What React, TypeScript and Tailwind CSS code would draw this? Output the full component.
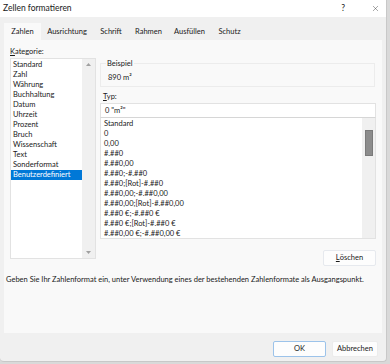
import { X } from 'lucide-react'

const TABS = [
  { label: 'Zahlen', w: 'w-[37px]', active: true },
  { label: 'Ausrichtung', w: 'w-[52px]', active: false },
  { label: 'Schrift', w: 'w-[36px]', active: false },
  { label: 'Rahmen', w: 'w-[39px]', active: false },
  { label: 'Ausfüllen', w: 'w-[43px]', active: false },
  { label: 'Schutz', w: 'w-[37px]', active: false },
]

const CATEGORIES = [
  'Standard',
  'Zahl',
  'Währung',
  'Buchhaltung',
  'Datum',
  'Uhrzeit',
  'Prozent',
  'Bruch',
  'Wissenschaft',
  'Text',
  'Sonderformat',
  'Benutzerdefiniert',
]

const FORMATS = [
  'Standard',
  '0',
  '0,00',
  '#.##0',
  '#.##0,00',
  '#.##0;-#.##0',
  '#.##0;[Rot]-#.##0',
  '#.##0,00;-#.##0,00',
  '#.##0,00;[Rot]-#.##0,00',
  '#.##0 €;-#.##0 €',
  '#.##0 €;[Rot]-#.##0 €',
  '#.##0,00 €;-#.##0,00 €',
]

export default function App() {
  return (
    <div
      className="w-[390px] h-[364px] bg-[#d9d9d9] overflow-hidden text-[7.5px] text-[#1a1a1a]"
      style={{ fontFamily: 'Lato, "Noto Sans", sans-serif' }}
    >
      <div className="w-[387px] h-[362px] bg-[#f0f0f0] flex flex-col rounded-b-[4px] border-r border-b border-[#c8c8c8]">
        {/* title bar */}
        <div className="h-[17px] bg-white flex items-center pl-[3px] pr-[6px]">
          <span className="text-[8.5px] flex-1">Zellen formatieren</span>
          <span className="text-[8.5px] mr-[26px]">?</span>
          <X size={9} strokeWidth={1} />
        </div>

        {/* tabs */}
        <div className="flex pl-[4px] mt-[6px] h-[17px]">
          {TABS.map((t) => (
            <div
              key={t.label}
              className={`${t.w} flex items-center justify-center ${t.active ? 'bg-[#f9f9f9]' : ''}`}
            >
              {t.label}
            </div>
          ))}
        </div>

        {/* panel */}
        <div className="mx-[4px] h-[293px] bg-[#f9f9f9] flex flex-col px-[6px]">
          <div className="flex gap-[4px] pt-[7px]">
            {/* left */}
            <div className="w-[86px] flex flex-col">
              <div className="h-[11px] leading-[10px]">
                <span className="underline">K</span>ategorie:
              </div>
              <div className="h-[201px] bg-white border border-[#e2e2e2] flex">
                <div className="flex-1 pt-[1px]">
                  {CATEGORIES.map((c) => (
                    <div
                      key={c}
                      className={`h-[10px] leading-[10px] pl-[2px] ${
                        c === 'Benutzerdefiniert' ? 'bg-[#0078d7] text-white' : ''
                      }`}
                    >
                      {c}
                    </div>
                  ))}
                </div>
                <div className="w-[13px] bg-[#f0f0f0] flex flex-col items-center justify-between py-[4px]">
                  <svg width="5" height="3" viewBox="0 0 5 3">
                    <path d="M2.5 0 L5 3 L0 3 Z" fill="#a0a0a0" />
                  </svg>
                  <svg width="5" height="3" viewBox="0 0 5 3">
                    <path d="M0 0 L5 0 L2.5 3 Z" fill="#a0a0a0" />
                  </svg>
                </div>
              </div>
            </div>

            {/* right */}
            <div className="flex-1 flex flex-col pt-[16px]">
              <div className="relative h-[24px] border border-[#ececec] mr-[1px]">
                <span className="absolute -top-[5px] left-[5px] bg-[#f9f9f9] px-[1px] leading-[9px]">
                  Beispiel
                </span>
                <div className="pl-[7px] pt-[9px] leading-[10px]">890 m²</div>
              </div>
              <div className="mt-[5px] h-[10px] leading-[10px] pl-[3px]">
                <span className="underline">T</span>yp:
              </div>
              <div className="mt-[1px] h-[15px] bg-white border border-[#e2e2e2] border-b-[#d6d6d6] flex items-center pl-[4px]">
                0 "m²"
              </div>
              <div className="h-[121px] bg-white border border-t-0 border-[#e2e2e2] flex">
                <div className="flex-1 pt-[1px]">
                  {FORMATS.map((f) => (
                    <div key={f} className="h-[10px] leading-[10px] pl-[3px] whitespace-nowrap">
                      {f}
                    </div>
                  ))}
                </div>
                <div className="w-[13px] bg-[#f0f0f0] pt-[12px] flex justify-center">
                  <div className="w-[8px] h-[26px] bg-[#8c8c8c] border border-[#7a7a7a]" />
                </div>
              </div>
              <div className="flex justify-end mt-[11px]">
                <button className="w-[53px] h-[16px] bg-[#fdfdfd] border border-[#e6e9ee] rounded-[2px] flex items-center justify-center">
                  <span className="underline">L</span>öschen
                </button>
              </div>
            </div>
          </div>

          <div className="mt-[9px] leading-[10px] -ml-[4px] whitespace-nowrap">
            Geben Sie Ihr Zahlenformat ein, unter Verwendung eines der bestehenden Zahlenformate als Ausgangspunkt.
          </div>
        </div>

        {/* footer */}
        <div className="flex justify-end gap-[6px] pr-[8px] mt-[8px]">
          <button className="w-[53px] h-[16px] bg-[#fdfdfd] border border-[#9cc3ea] rounded-[2px] flex items-center justify-center">
            OK
          </button>
          <button className="w-[46px] h-[16px] bg-[#fdfdfd] border border-[#ececec] rounded-[2px] flex items-center justify-center">
            Abbrechen
          </button>
        </div>
      </div>
    </div>
  )
}
